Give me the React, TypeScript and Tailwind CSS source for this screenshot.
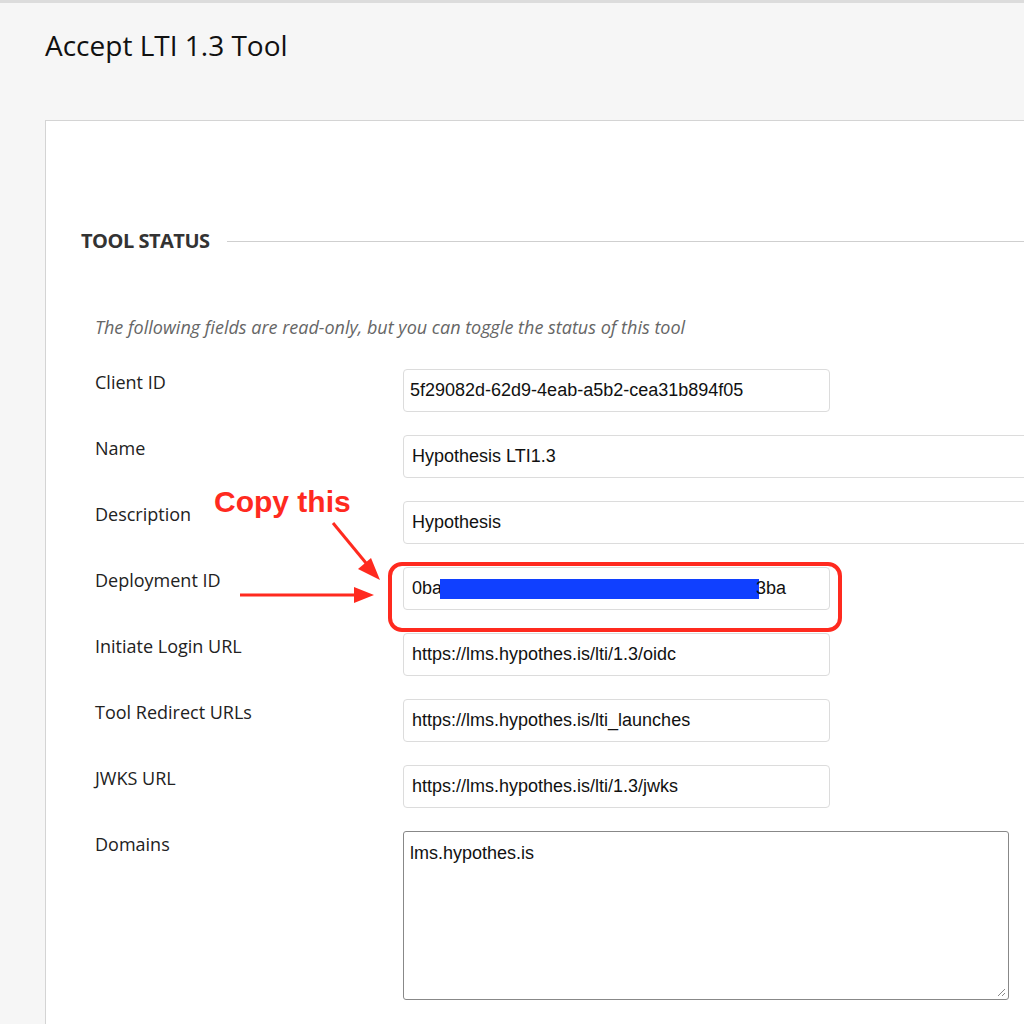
import React from "react";

const rows: [string, string, string][] = [
  ["Client ID", "5f29082d-62d9-4eab-a5b2-cea31b894f05", "short"],
  ["Name", "Hypothesis LTI1.3", "long"],
  ["Description", "Hypothesis", "long"],
  ["Deployment ID", "dep", "short"],
  ["Initiate Login URL", "https://lms.hypothes.is/lti/1.3/oidc", "short"],
  ["Tool Redirect URLs", "https://lms.hypothes.is/lti_launches", "short"],
  ["JWKS URL", "https://lms.hypothes.is/lti/1.3/jwks", "short"],
];

export default function App() {
  return (
    <div className="relative w-[1024px] h-[1024px] overflow-hidden bg-[#f6f6f6] border-t-[3px] border-[#dcdcdc]" style={{ fontFamily: '"Open Sans", sans-serif' }}>
      <h1 className="ml-[45px] mt-[25px] text-[28px] leading-[34px] text-[#111]">Accept LTI 1.3 Tool</h1>
      <div className="ml-[45px] mt-[58px] w-[1100px] h-[950px] bg-white border border-[#d4d4d4]">
        <div className="flex items-center mt-[105px] ml-[35px]">
          <span className="text-[20px] font-bold text-[#333] tracking-tight">TOOL STATUS</span>
          <div className="ml-[17px] flex-1 h-px bg-[#cfcfcf]" />
        </div>
        <p className="ml-[49px] mt-[58px] text-[18px] italic text-[#666]">The following fields are read-only, but you can toggle the status of this tool</p>
        <div className="mt-[28px] ml-[49px]" style={{ fontFamily: '"Liberation Sans", Arial, sans-serif' }}>
          {rows.map(([label, value, kind]) => (
            <div key={label} className="flex h-[66px]">
              <div className="w-[308px] text-[18px] text-[#222]" style={{ fontFamily: '"Open Sans", sans-serif' }}>{label}</div>
              <div className={`h-[43px] ${kind === "long" ? "w-[700px]" : "w-[427px]"} rounded-[4px] border border-[#dcdcdc] bg-white flex items-center px-[8px] text-[18px] text-[#111] overflow-hidden whitespace-nowrap`}>
                {label === "Client ID" ? (
                  <span className="-ml-[2px]">{value}</span>
                ) : label === "Deployment ID" ? (
                  <span className="flex items-center">
                    0b<span className="inline-block w-[8px] overflow-hidden">a</span>
                    <span className="inline-block w-[319px] h-[20px] bg-[#1040ff]" />
                    <span className="-ml-[3px]">3ba</span>
                  </span>
                ) : (
                  value
                )}
              </div>
            </div>
          ))}
          <div className="flex">
            <div className="w-[308px] text-[18px] text-[#222]" style={{ fontFamily: '"Open Sans", sans-serif' }}>Domains</div>
            <div className="w-[606px] h-[169px] rounded-[3px] border border-[#888] bg-white px-[6px] pt-[8px] text-[18px] text-[#111] relative">
              lms.hypothes.is
              <svg className="absolute right-[2px] bottom-[2px]" width="10" height="10" viewBox="0 0 10 10"><path d="M9 2L2 9M9 6L6 9" stroke="#888" strokeWidth="1" /></svg>
            </div>
          </div>
        </div>
      </div>
      <div className="absolute left-[388px] top-[559px] w-[454px] h-[70px] rounded-[14px] border-[4px] border-[#ff2a1f]" />
      <div className="absolute left-[214px] top-[476px] text-[30px] font-bold text-[#ff2a1f]" style={{ fontFamily: '"Liberation Sans", Arial, sans-serif' }}>Copy this</div>
      <svg className="absolute left-0 top-0" width="1024" height="1024" style={{ pointerEvents: "none" }}>
        <line x1="333" y1="520" x2="366" y2="560" stroke="#ff2a1f" strokeWidth="3" />
        <polygon points="380,577 358,566 371,555" fill="#ff2a1f" />
        <line x1="240" y1="592" x2="356" y2="592" stroke="#ff2a1f" strokeWidth="3" />
        <polygon points="374,592 354,584 354,600" fill="#ff2a1f" />
      </svg>
    </div>
  );
}
